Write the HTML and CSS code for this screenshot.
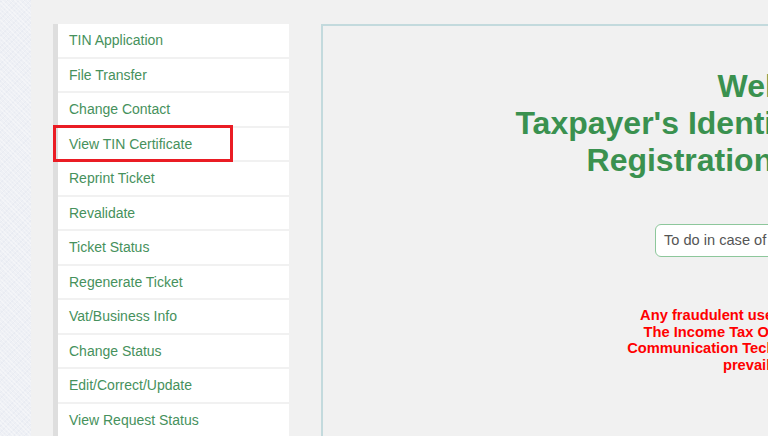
FILE: index.html
```html
<html>

<head>
  <link rel="stylesheet" href="styles.css">
</head>

<body>
  <div class="strip"></div>
  <div class="page">
    <aside class="sidebar">
      <ul class="menu">
        <li><a href="#">TIN Application</a></li>
        <li><a href="#">File Transfer</a></li>
        <li><a href="#">Change Contact</a></li>
        <li><a href="#">View TIN Certificate</a></li>
        <li><a href="#">Reprint Ticket</a></li>
        <li><a href="#">Revalidate</a></li>
        <li><a href="#">Ticket Status</a></li>
        <li><a href="#">Regenerate Ticket</a></li>
        <li><a href="#">Vat/Business Info</a></li>
        <li><a href="#">Change Status</a></li>
        <li><a href="#">Edit/Correct/Update</a></li>
        <li><a href="#">View Request Status</a></li>
        <li><a href="#">Help</a></li>
      </ul>
      <!-- red mark round the selected item -->
      <span class="highlight"></span>
    </aside>

    <main class="panel">
      <h1 class="welcome">
        Welcome to<br>
        Taxpayer's Identification Number (TIN)<br>
        Registration / Re-registration
      </h1>
      <div class="choice">To do in case of lost User ID / Password</div>
      <p class="warning">
        Any fraudulent use of this system is punishable<br>
        The Income Tax Ordinance, 1984 and the rules,<br>
        Communication Technology Act, 2006 shall equally,<br>
        prevail in these matters.
      </p>
    </main>
  </div>
</body>

</html>
```

FILE: styles.css
```css
html,
body {
  margin: 0;
  height: 436px;
  overflow: hidden;
}

body {
  display: flex;
  background: #f1f1f1;
  font-family: "Liberation Sans", Arial, sans-serif;
}

/* textured edge on the far left */
.strip {
  flex: 0 0 31px;
  background-color: #eef0f5;
  background-image:
    repeating-linear-gradient(45deg, rgba(255, 255, 255, .35) 0 1px, transparent 1px 3px),
    repeating-linear-gradient(-45deg, rgba(210, 216, 230, .2) 0 1px, transparent 1px 4px);
}

.page {
  display: flex;
  gap: 32px;
  padding: 24px 0 0 22px;
}

/* menu */
.sidebar {
  position: relative;
  flex: 0 0 236px;
}

.menu {
  list-style: none;
  margin: 0;
  padding: 0;
  border-left: 5px solid #dedede;
}

.menu li {
  margin-bottom: 2px;
  background: #fff;
}

.menu a {
  display: block;
  padding: 8px 11px;
  line-height: 16.5px;
  font-size: 14px;
  color: #46915c;
  text-decoration: none;
}

.highlight {
  position: absolute;
  left: 0;
  top: 101px;
  width: 174px;
  height: 31px;
  border: 3px solid #ea1c24;
}

/* main area */
.panel {
  flex: 0 0 968px;
  min-height: 520px;
  border: 2px solid #c3dadd;
  text-align: center;
}

.welcome {
  margin: 42px 0 0;
  font-size: 32px;
  line-height: 37px;
  color: #3a914f;
}

.choice {
  display: inline-block;
  box-sizing: border-box;
  width: 304px;
  height: 33px;
  margin-top: 45px;
  padding: 0 8px;
  border: 1px solid #8dc79b;
  border-radius: 6px;
  background: #fff;
  text-align: left;
  line-height: 31px;
  font-size: 14.6px;
  color: #555;
  white-space: nowrap;
  overflow: hidden;
}

.warning {
  margin: 50px 0 0;
  font-size: 14.7px;
  font-weight: bold;
  line-height: 16.5px;
  color: #ff0000;
}
```
